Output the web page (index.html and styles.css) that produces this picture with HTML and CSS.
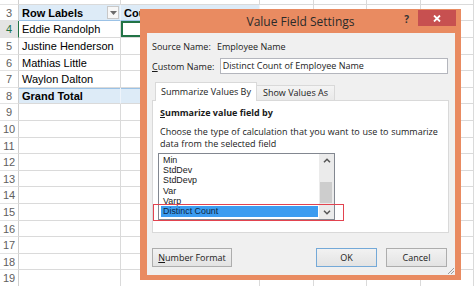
FILE: index.html
```html
<!DOCTYPE html>
<html lang="en">
<head>
    <meta charset="UTF-8">
    <title>Value Field Settings</title>
    <link rel="stylesheet" href="styles.css">
</head>
<body>
    <div class="sheet">
        <div class="row"><div class="rh"></div><div class="c ca"></div><div class="c cb"></div><div class="c cx"></div><div class="c cx"></div><div class="c cx"></div><div class="c cx"></div></div>
        <div class="row"><div class="rh">3</div><div class="c ca piv-head"><span>Row Labels</span><span class="filter-btn"><svg width="7" height="4" viewBox="0 0 7 4"><path d="M0 0h7L3.5 4z" fill="#6b6b6b"/></svg></span></div><div class="c cb piv-head">Count of Employee Name</div><div class="c cx"></div><div class="c cx"></div><div class="c cx"></div><div class="c cx"></div></div>
        <div class="row"><div class="rh rh-sel">4</div><div class="c ca">Eddie Randolph</div><div class="c cb cell-sel"></div><div class="c cx"></div><div class="c cx"></div><div class="c cx"></div><div class="c cx"></div></div>
        <div class="row"><div class="rh">5</div><div class="c ca">Justine Henderson</div><div class="c cb"></div><div class="c cx"></div><div class="c cx"></div><div class="c cx"></div><div class="c cx"></div></div>
        <div class="row"><div class="rh">6</div><div class="c ca">Mathias Little</div><div class="c cb"></div><div class="c cx"></div><div class="c cx"></div><div class="c cx"></div><div class="c cx"></div></div>
        <div class="row"><div class="rh">7</div><div class="c ca">Waylon Dalton</div><div class="c cb"></div><div class="c cx"></div><div class="c cx"></div><div class="c cx"></div><div class="c cx"></div></div>
        <div class="row"><div class="rh">8</div><div class="c ca piv-total">Grand Total</div><div class="c cb piv-total"></div><div class="c cx"></div><div class="c cx"></div><div class="c cx"></div><div class="c cx"></div></div>
        <div class="row"><div class="rh">9</div><div class="c ca"></div><div class="c cb"></div><div class="c cx"></div><div class="c cx"></div><div class="c cx"></div><div class="c cx"></div></div>
        <div class="row"><div class="rh">10</div><div class="c ca"></div><div class="c cb"></div><div class="c cx"></div><div class="c cx"></div><div class="c cx"></div><div class="c cx"></div></div>
        <div class="row"><div class="rh">11</div><div class="c ca"></div><div class="c cb"></div><div class="c cx"></div><div class="c cx"></div><div class="c cx"></div><div class="c cx"></div></div>
        <div class="row"><div class="rh">12</div><div class="c ca"></div><div class="c cb"></div><div class="c cx"></div><div class="c cx"></div><div class="c cx"></div><div class="c cx"></div></div>
        <div class="row"><div class="rh">13</div><div class="c ca"></div><div class="c cb"></div><div class="c cx"></div><div class="c cx"></div><div class="c cx"></div><div class="c cx"></div></div>
        <div class="row"><div class="rh">14</div><div class="c ca"></div><div class="c cb"></div><div class="c cx"></div><div class="c cx"></div><div class="c cx"></div><div class="c cx"></div></div>
        <div class="row"><div class="rh">15</div><div class="c ca"></div><div class="c cb"></div><div class="c cx"></div><div class="c cx"></div><div class="c cx"></div><div class="c cx"></div></div>
        <div class="row"><div class="rh">16</div><div class="c ca"></div><div class="c cb"></div><div class="c cx"></div><div class="c cx"></div><div class="c cx"></div><div class="c cx"></div></div>
        <div class="row"><div class="rh">17</div><div class="c ca"></div><div class="c cb"></div><div class="c cx"></div><div class="c cx"></div><div class="c cx"></div><div class="c cx"></div></div>
        <div class="row"><div class="rh">18</div><div class="c ca"></div><div class="c cb"></div><div class="c cx"></div><div class="c cx"></div><div class="c cx"></div><div class="c cx"></div></div>
        <div class="row"><div class="rh">19</div><div class="c ca"></div><div class="c cb"></div><div class="c cx"></div><div class="c cx"></div><div class="c cx"></div><div class="c cx"></div></div>
    </div>

    <!-- Value Field Settings dialog, floating over the sheet -->
    <div class="dialog">
        <div class="titlebar">
            <span></span>
            <span class="title">Value Field Settings</span>
            <span class="title-ctrls">
                <span class="help">?</span>
                <span class="close"><svg width="8" height="7" viewBox="0 0 8 7"><path d="M1 0.5L7 6.5M7 0.5L1 6.5" stroke="#fff" stroke-width="1.8"/></svg></span>
            </span>
        </div>
        <div class="dlg-body">
            <div class="field source">
                <span class="lbl">Source Name:</span>
                <span>Employee Name</span>
            </div>
            <div class="field custom">
                <span class="lbl"><u>C</u>ustom Name:</span>
                <div class="input">Distinct Count of Employee Name</div>
            </div>
            <div class="tabs">
                <div class="tab active">Summarize Values By</div>
                <div class="tab">Show Values As</div>
            </div>
            <div class="panel">
                <div class="panel-head"><u>S</u>ummarize value field by</div>
                <div class="panel-text">Choose the type of calculation that you want to use to summarize<br>data from the selected field</div>
                <div class="list">
                    <div class="items">
                        <div class="item">Min</div>
                        <div class="item">StdDev</div>
                        <div class="item">StdDevp</div>
                        <div class="item">Var</div>
                        <div class="item">Varp</div>
                        <div class="item sel">Distinct Count</div>
                    </div>
                    <div class="scroll">
                        <div class="arrow"><svg width="8" height="5" viewBox="0 0 8 5"><path d="M1 4.2L4 1.2L7 4.2" fill="none" stroke="#555" stroke-width="1.5"/></svg></div>
                        <div class="track"><div class="thumb"></div></div>
                        <div class="arrow"><svg width="8" height="5" viewBox="0 0 8 5"><path d="M1 0.8L4 3.8L7 0.8" fill="none" stroke="#555" stroke-width="1.5"/></svg></div>
                    </div>
                </div>
                <div class="mark"></div>
            </div>
            <div class="buttons">
                <div class="btn btn-wide"><u>N</u>umber Format</div>
                <div class="btn btn-default">OK</div>
                <div class="btn">Cancel</div>
            </div>
            <svg class="grip" width="6" height="6" viewBox="0 0 6 6"><path d="M0 6L6 0M3 6L6 3" stroke="#9a9a9a" stroke-width="1"/></svg>
        </div>
    </div>
</body>
</html>
```

FILE: styles.css
```css
body {
    margin: 0;
    width: 474px;
    height: 286px;
    overflow: hidden;
    position: relative;
    background: #fff;
    font-family: "Liberation Sans", Arial, sans-serif;
}

/* spreadsheet */
.sheet {
    margin-top: -11.8px;
}
.row {
    display: flex;
    height: 16.6px;
}
.rh {
    flex: none;
    width: 19px;
    box-sizing: border-box;
    border-right: 1px solid #cfcfcf;
    border-bottom: 1px solid #e3e3e3;
    background: #fff;
    color: #606060;
    font-size: 11px;
    line-height: 16px;
    text-align: center;
}
.rh-sel {
    background: #e4e4e4;
    color: #217346;
    border-right: 1px solid #217346;
}
.c {
    flex: none;
    box-sizing: border-box;
    border-right: 1px solid #dadada;
    border-bottom: 1px solid #dadada;
    padding-left: 3px;
    font-size: 11px;
    line-height: 16px;
    color: #000;
    white-space: nowrap;
    overflow: hidden;
}
.ca { width: 102px; }
.cb { width: 139px; }
.cx { width: 53.5px; }

.piv-head {
    background: #ddebf7;
    border-bottom-color: #9bc2e6;
    border-right-color: #eef4fb;
    font-weight: bold;
}
.ca.piv-head {
    display: flex;
    align-items: center;
    justify-content: space-between;
    padding-right: 1px;
}
.filter-btn {
    width: 12px;
    height: 13px;
    box-sizing: border-box;
    border: 1px solid #c8c8c8;
    background: #f7f7f7;
    display: flex;
    align-items: center;
    justify-content: center;
}
.piv-total {
    background: #ddebf7;
    box-shadow: inset 0 1px #9bc2e6;
    border-right-color: #eef4fb;
    font-weight: bold;
}
.cell-sel {
    box-shadow: inset 0 0 0 2px #217346;
}

/* dialog */
.dialog {
    position: absolute;
    left: 140px;
    top: 9px;
    width: 321px;
    height: 271px;
    background: #e98b61;
    display: flex;
    flex-direction: column;
    font-family: "Open Sans", "Noto Sans", sans-serif;
    font-size: 9px;
    color: #1a1a1a;
}
.titlebar {
    height: 24px;
    display: grid;
    grid-template-columns: 1fr auto 1fr;
}
.title {
    font-size: 12px;
    line-height: 26px;
    color: #2a2a2a;
}
.title-ctrls {
    display: flex;
    justify-content: flex-end;
    align-items: flex-start;
    padding-right: 5px;
}
.help {
    font-size: 10px;
    font-weight: bold;
    line-height: 20px;
    margin-right: 9px;
    color: #333;
}
.close {
    margin-top: 1px;
    width: 38px;
    height: 16px;
    background: #c75050;
    display: flex;
    align-items: center;
    justify-content: center;
}
.dlg-body {
    flex: 1;
    margin: 0 6px 5px 7px;
    padding: 0 7px 0 5px;
    background: #f0f0f0;
    position: relative;
}
.field {
    display: flex;
    align-items: center;
}
.source {
    margin-top: 6px;
    height: 14px;
}
.source .lbl { width: 65px; }
.custom {
    margin-top: 5px;
    height: 16px;
}
.custom .lbl { width: 68px; }
.input {
    width: 229px;
    height: 16px;
    box-sizing: border-box;
    border: 1px solid #b4b6bd;
    background: #fff;
    padding-left: 2px;
    line-height: 14px;
}
.tabs {
    margin-top: 8px;
    height: 18px;
    display: flex;
    align-items: flex-end;
    padding-left: 3px;
}
.tab {
    box-sizing: border-box;
    width: 78px;
    height: 15px;
    border: 1px solid #d9d9d9;
    border-left: none;
    border-bottom: none;
    background: linear-gradient(#f4f4f4, #e9e9e9);
    text-align: center;
    line-height: 14px;
}
.tab.active {
    width: 102px;
    height: 19px;
    margin-bottom: -1px;
    border-left: 1px solid #d9d9d9;
    background: #fff;
    line-height: 17px;
    position: relative;
    z-index: 1;
}
.panel {
    width: 297px;
    height: 133px;
    box-sizing: border-box;
    border: 1px solid #d9d9d9;
    background: #fff;
    padding-left: 5px;
    position: relative;
}
.panel-head {
    margin-top: 5px;
    padding-left: 2px;
    line-height: 14px;
    font-weight: bold;
}
.panel-text {
    margin-top: 5.6px;
    padding-left: 2px;
    line-height: 12.3px;
    word-spacing: 0.3px;
}
.list {
    margin-top: 2.6px;
    width: 177px;
    height: 67px;
    box-sizing: border-box;
    border: 1px solid #828790;
    display: flex;
    overflow: hidden;
}
.items {
    flex: 1;
    padding: 1px 1px 0 2px;
    font-family: "Liberation Sans", Arial, sans-serif;
    font-size: 8.9px;
}
.item {
    height: 10.3px;
    line-height: 10.3px;
    padding-left: 2px;
}
.item.sel {
    background: #3c9cf0;
    color: #0c2746;
}
.scroll {
    width: 15px;
    background: #ebebeb;
    display: flex;
    flex-direction: column;
}
.arrow {
    height: 13px;
    display: flex;
    align-items: center;
    justify-content: center;
}
.track {
    flex: 1;
}
.thumb {
    margin: 15px 2px 0 1px;
    height: 21px;
    background: #cdcdcd;
}
.mark {
    position: absolute;
    left: 0;
    top: 103px;
    width: 191px;
    height: 17px;
    box-sizing: border-box;
    border: 1px solid #e2434f;
}
.buttons {
    margin-top: 15px;
    padding-right: 1px;
    display: flex;
    gap: 9px;
}
.btn {
    width: 61px;
    height: 19px;
    box-sizing: border-box;
    border: 1px solid #adadad;
    background: linear-gradient(#f2f2f2, #e3e3e3);
    text-align: center;
    line-height: 17px;
}
.btn-wide {
    width: 80px;
    margin-right: auto;
}
.btn-default {
    border-color: #74a9d8;
}
.grip {
    position: absolute;
    right: 1px;
    bottom: 1px;
}
```
